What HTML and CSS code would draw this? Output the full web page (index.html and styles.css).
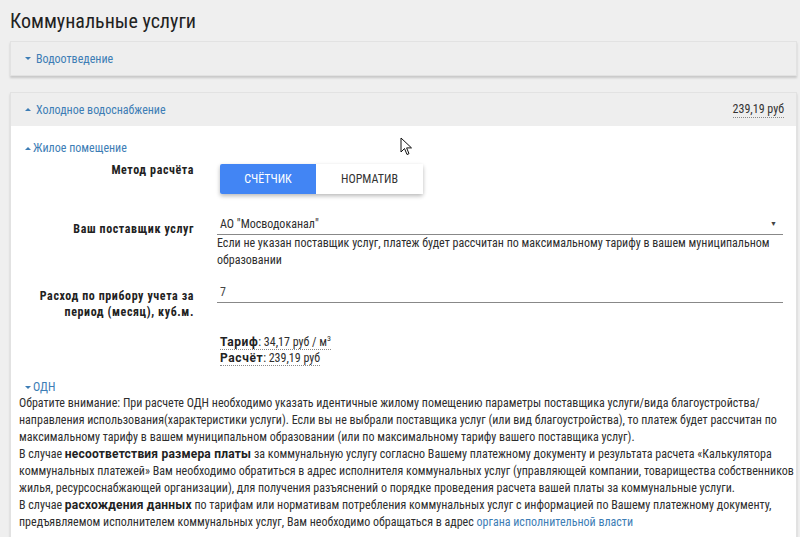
FILE: index.html
```html
<!DOCTYPE html>
<html lang="ru">

<head>
    <meta charset="UTF-8" />
    <meta name="viewport" content="width=device-width, initial-scale=1" />
    <title>Коммунальные услуги</title>
    <link rel="stylesheet" href="styles.css">
</head>

<body>
    <div class="page">

        <h1 class="title">Коммунальные услуги</h1>

        <!-- Водоотведение (свернуто) -->
        <section class="panel">
            <div class="panel-head">
                <a href="#" class="head-link"><span class="caret down"></span>Водоотведение</a>
            </div>
        </section>

        <!-- Холодное водоснабжение (раскрыто) -->
        <section class="panel open">
            <div class="panel-head">
                <a href="#" class="head-link"><span class="caret up"></span>Холодное водоснабжение</a>
                <span class="sum">239,19 руб</span>
            </div>

            <div class="panel-body">
                <a href="#" class="sub-link"><span class="caret up"></span>Жилое помещение</a>

                <div class="form-row row-method">
                    <div class="label">Метод расчёта</div>
                    <div class="control">
                        <div class="switch">
                            <button class="active">СЧЁТЧИК</button>
                            <button>НОРМАТИВ</button>
                        </div>
                    </div>
                </div>

                <div class="form-row row-provider">
                    <div class="label">Ваш поставщик услуг</div>
                    <div class="control">
                        <div class="select">
                            <span>АО "Мосводоканал"</span>
                            <span class="arrow">&#9660;</span>
                        </div>
                        <p class="help">Если не указан поставщик услуг, платеж будет рассчитан по максимальному тарифу в вашем муниципальном<br>образовании</p>
                    </div>
                </div>

                <div class="form-row row-amount">
                    <div class="label">Расход по прибору учета за<br>период (месяц), куб.м.</div>
                    <div class="control">
                        <div class="input">7</div>
                    </div>
                </div>

                <div class="result">
                    <div><span class="dotted"><b>Тариф</b>: 34,17 руб / м<sup>3</sup></span></div>
                    <div><span class="dotted"><b>Расчёт</b>: 239,19 руб</span></div>
                </div>

                <a href="#" class="sub-link odn"><span class="caret down"></span>ОДН</a>
                <div class="note">
                    Обратите внимание: При расчете ОДН необходимо указать идентичные жилому помещению параметры поставщика услуги/вида благоустройства/<br>
                    направления использования(характеристики услуги). Если вы не выбрали поставщика услуг (или вид благоустройства), то платеж будет рассчитан по<br>
                    максимальному тарифу в вашем муниципальном образовании (или по максимальному тарифу вашего поставщика услуг).<br>
                    В случае <b>несоответствия размера платы</b> за коммунальную услугу согласно Вашему платежному документу и результата расчета «Калькулятора<br>
                    коммунальных платежей» Вам необходимо обратиться в адрес исполнителя коммунальных услуг (управляющей компании, товарищества собственников<br>
                    жилья, ресурсоснабжающей организации), для получения разъяснений о порядке проведения расчета вашей платы за коммунальные услуги.<br>
                    В случае <b>расхождения данных</b> по тарифам или нормативам потребления коммунальных услуг с информацией по Вашему платежному документу,<br>
                    предъявляемом исполнителем коммунальных услуг, Вам необходимо обращаться в адрес <a href="#">органа исполнительной власти</a>
                </div>
            </div>
        </section>

        <!-- указатель мыши -->
        <svg class="cursor" width="13" height="19" viewBox="0 0 13 19">
            <path d="M1 1 L1 15 L4.5 11.5 L7 17.5 L9 16.7 L6.6 10.9 L11.5 10.9 Z" fill="#fff" stroke="#111" stroke-width="1" stroke-linejoin="round" />
        </svg>

    </div>
</body>

</html>
```

FILE: styles.css
```css
* {
    box-sizing: border-box;
    margin: 0;
    padding: 0;
}

body {
    font-family: "Roboto Condensed", "Liberation Sans Narrow", "Arial Narrow", Roboto, sans-serif;
    font-size: 12px;
    background-color: #efefef;
    color: #2e2e2e;
    overflow: hidden;
    white-space: nowrap;
}

a {
    color: #3d7db5;
    text-decoration: none;
}

.page {
    position: relative;
    padding: 0 3px 0 10px;
}

.title {
    font-size: 20px;
    font-weight: 400;
    line-height: 24px;
    color: #222;
    padding-top: 9px;
}

.panel {
    margin-top: 8px;
    border: 1px solid #e2e2e2;
    background: #eee;
    box-shadow: 0 2px 2px rgba(0, 0, 0, 0.16);
}

.panel.open {
    margin-top: 16px;
}

.panel-head {
    height: 33px;
    display: flex;
    align-items: center;
    justify-content: space-between;
    padding: 0 12px 0 14px;
}

.head-link {
    display: flex;
    align-items: center;
}

.caret {
    display: inline-block;
    width: 0;
    height: 0;
    border-left: 3px solid transparent;
    border-right: 3px solid transparent;
    margin-right: 5px;
}

.caret.down {
    border-top: 3px solid currentColor;
}

.caret.up {
    border-bottom: 3px solid currentColor;
}

.sum {
    border-bottom: 1px dotted #888;
    line-height: 15px;
    color: #333;
}

.panel-body {
    background: #fff;
    padding: 14px 13px 14px 8px;
}

.sub-link {
    display: flex;
    align-items: center;
    line-height: 16px;
    padding-left: 6px;
}

.sub-link .caret {
    margin-right: 2px;
}

.form-row {
    display: grid;
    grid-template-columns: 175px minmax(0, 1fr);
    column-gap: 23px;
}

.label {
    text-align: right;
    font-weight: 700;
    line-height: 16px;
    letter-spacing: 0.6px;
    color: #222;
}

.row-method {
    margin-top: 6px;
}

.switch {
    display: inline-flex;
    margin: 2px 0 0 3px;
    box-shadow: 0 2px 4px rgba(0, 0, 0, 0.28);
    border-radius: 2px;
}

.switch button {
    height: 30px;
    border: none;
    background: #fff;
    font-family: inherit;
    font-size: 12px;
    color: #333;
    width: 107px;
}

.switch button.active {
    width: 96px;
    background: #4285f4;
    color: #fff;
    border-radius: 2px 0 0 2px;
}

.row-provider {
    margin-top: 20px;
}

.row-provider .label {
    padding-top: 7px;
}

.select {
    display: flex;
    justify-content: space-between;
    height: 21px;
    line-height: 20px;
    padding: 0 6px 0 3px;
    border-bottom: 1px solid #888;
}

.select .arrow {
    font-size: 7px;
    color: #444;
}

.help {
    line-height: 17px;
}

.row-amount {
    margin-top: 13px;
}

.row-amount .label {
    padding-top: 6px;
}

.input {
    height: 21px;
    line-height: 20px;
    padding-left: 3px;
    border-bottom: 1px solid #888;
    color: #444;
}

.result {
    margin-top: 14px;
    padding-left: 201px;
    line-height: 16px;
}

.dotted {
    border-bottom: 1px dotted #888;
}

.result b,
.note b {
    font-family: Roboto, sans-serif;
    letter-spacing: 0.2px;
    color: #222;
}

.result b {
    letter-spacing: 0.6px;
}

.result sup {
    font-size: 8px;
    line-height: 0;
}

.odn {
    margin-top: 13px;
}

.note {
    line-height: 17px;
}

.cursor {
    position: absolute;
    left: 400px;
    top: 137px;
}
```
